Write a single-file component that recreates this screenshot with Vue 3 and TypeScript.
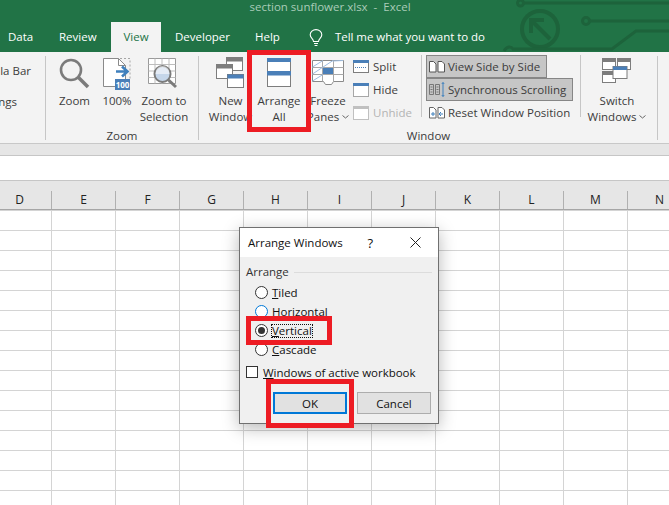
<template>
  <div class="app">
    <header class="titlebar">
      <svg class="circuit" width="180" height="52" viewBox="0 0 180 52" fill="none" stroke="#1d633b" stroke-width="3">
        <circle cx="31.5" cy="3" r="3" />
        <path d="M35 3H180" />
        <circle cx="51" cy="29" r="18" stroke-width="4" />
        <path d="M61 39 43 21M42 33V20H55" stroke-width="4" />
        <circle cx="97" cy="21" r="3.5" />
        <path d="M101 21H180M180 31H147L123 49H24C22 46 18 46 15 51" />
      </svg>
      <div class="title">section sunflower.xlsx &nbsp;-&nbsp; Excel</div>
      <nav class="tabs">
        <span class="tab tab-data">Data</span>
        <span class="tab tab-review">Review</span>
        <span class="tab tab-active">View</span>
        <span class="tab tab-dev">Developer</span>
        <span class="tab tab-help">Help</span>
        <svg class="bulb" width="14" height="18" viewBox="0 0 14 18" fill="none" stroke="#fff" stroke-width="1.1">
          <path d="M4.5 12.5C4.3 9.8 1.2 8.9 1.2 5.8a5.8 5.2 0 0 1 11.6 0c0 3.1-3.1 4-3.3 6.7z" />
          <path d="M5 14.5h4M5.6 16.5h2.8" />
        </svg>
        <span class="tab tell">Tell me what you want to do</span>
      </nav>
    </header>

    <section class="ribbon">
      <div class="group group-show">
        <div class="show-list">
          <span>Formula Bar</span>
          <span class="show-head">Headings</span>
        </div>
      </div>

      <div class="group group-zoom">
        <div class="group-body">
          <div class="big w-zoom">
            <svg class="icon" width="34" height="34" viewBox="0 0 34 34" fill="none" stroke="#7b7b7b">
              <circle cx="13" cy="13" r="10" stroke-width="2.6" />
              <path d="M20.5 20.5 30 30" stroke-width="3.6" />
            </svg>
            <span>Zoom</span>
          </div>
          <div class="big w-100">
            <svg class="icon" width="30" height="34" viewBox="0 0 30 34" fill="none">
              <path d="M1.5 1.5h15l7 7v21h-22z" fill="#fff" stroke="#8a8a8a" />
              <path d="M16.5 1.5v7h7" stroke="#8a8a8a" />
              <path d="M18 1.5h10v20" stroke="#a5a5a5" stroke-dasharray="2 2" />
              <path d="M14 14.5h11M20 9.5l5.5 5-5.5 5" stroke="#3f80bd" stroke-width="2.6" />
              <rect x="13" y="22" width="15" height="11" fill="#4a7fb8" />
              <text x="20.5" y="31" text-anchor="middle" class="badge">100</text>
            </svg>
            <span>100%</span>
          </div>
          <div class="big w-sel">
            <svg class="icon" width="34" height="34" viewBox="0 0 34 34" fill="none">
              <path d="M1.5 1.5h27v25h-27z" fill="#fff" stroke="#9a9a9a" />
              <path d="M1.5 7.5h27M1.5 14h27M1.5 20.5h27M8 1.5v25M15 1.5v25M22 1.5v25" stroke="#bdbdbd" />
              <circle cx="15.5" cy="17" r="8" fill="#c5d6ea" stroke="#7b7b7b" stroke-width="2" />
              <path d="M8.5 17h14v-1a7 7 0 0 0-14 0z" fill="#fff" opacity=".55" />
              <path d="M21.5 23 29 30" stroke="#7b7b7b" stroke-width="3" />
            </svg>
            <span>Zoom to<br />Selection</span>
          </div>
        </div>
        <div class="group-label">Zoom</div>
      </div>

      <div class="group group-window">
        <div class="group-body">
          <div class="big w-new">
            <svg class="icon" width="30" height="34" viewBox="0 0 30 34" fill="none" stroke="#7d7d7d">
              <rect x="10.5" y="0.5" width="16" height="13" fill="#fff" />
              <rect x="10.5" y="0.5" width="16" height="3.5" fill="#7d7d7d" />
              <rect x="0.5" y="7.5" width="16" height="14" fill="#fff" />
              <rect x="0.5" y="7.5" width="16" height="3.5" fill="#7d7d7d" />
              <rect x="11.5" y="17.5" width="16" height="13" fill="#fff" />
              <rect x="11.5" y="17.5" width="16" height="4" fill="#4a7fb8" stroke="none" />
            </svg>
            <span>New<br />Window</span>
          </div>
          <div class="big w-arrange">
            <svg class="icon" width="26" height="34" viewBox="0 0 26 34" fill="none">
              <rect x="1.5" y="1.5" width="23" height="28" fill="#fff" stroke="#7d7d7d" />
              <rect x="1" y="1" width="24" height="4" fill="#4a7fb8" />
              <rect x="1" y="14" width="24" height="4.5" fill="#4a7fb8" />
            </svg>
            <span>Arrange<br />All</span>
          </div>
          <div class="big w-freeze">
            <svg class="icon" width="34" height="34" viewBox="0 0 34 34" fill="none">
              <path d="M1.5 3.5h31v21h-10l-2 3h-6l-2-3h-11z" fill="#fff" stroke="#8a8a8a" />
              <path d="M1.5 10.5h31M1.5 17.5h31M11.5 3.5v21M22.5 3.5v21" stroke="#a8a8a8" />
              <path d="M1.5 10 12 3.5M1.5 17 22 3.5M1.5 24 12 17.5M22 4 32 3.5" stroke="#9dbde0" />
              <rect x="12" y="11" width="10" height="6" fill="#4a7fb8" />
            </svg>
            <span>Freeze<br />Panes <svg class="chev" width="7" height="4" viewBox="0 0 7 4" fill="none" stroke="#666"><path d="M.5.5l3 2.5 3-2.5" /></svg></span>
          </div>
          <div class="col-small">
            <div class="row-small">
              <svg class="icon-s" width="16" height="14" viewBox="0 0 16 14" fill="none">
                <rect x=".5" y=".5" width="15" height="12" fill="#fff" stroke="#7d7d7d" />
                <rect x="0" y="0" width="16" height="3" fill="#4a7fb8" />
                <path d="M2 7.5h12" stroke="#4a7fb8" stroke-dasharray="1 1" />
              </svg>
              <span>Split</span>
            </div>
            <div class="row-small">
              <svg class="icon-s" width="16" height="14" viewBox="0 0 16 14" fill="none">
                <rect x=".5" y=".5" width="15" height="13" fill="#fff" stroke="#555" stroke-dasharray="1 1" />
                <rect x="0" y="0" width="16" height="3" fill="#4a7fb8" />
              </svg>
              <span>Hide</span>
            </div>
            <div class="row-small disabled">
              <svg class="icon-s" width="16" height="14" viewBox="0 0 16 14" fill="none">
                <rect x=".5" y=".5" width="15" height="13" fill="#fff" stroke="#c0c0c0" />
                <rect x="0" y="0" width="16" height="3" fill="#c0c0c0" />
              </svg>
              <span>Unhide</span>
            </div>
          </div>
          <div class="col-side">
            <div class="row-side on">
              <svg class="icon-s" width="16" height="13" viewBox="0 0 16 13" fill="#fff" stroke="#555">
                <path d="M.5 1.5h4l2.5 2.5v8H.5zM9 1.5h4l2.5 2.5v8H9z" />
              </svg>
              <span>View Side by Side</span>
            </div>
            <div class="row-side on row-sync">
              <svg class="icon-s" width="16" height="15" viewBox="0 0 16 15" fill="none">
                <path d="M.5 2.5h4v10h-4zM6.5 2.5h4v10h-4zM1.5 5h2M1.5 7.5h2M1.5 10h2M7.5 5h2M7.5 7.5h2M7.5 10h2" stroke="#777" />
                <path d="M14 .5v14M12.8 2 14 .5 15.2 2M12.8 13l1.2 1.5 1.2-1.5" stroke="#3f80bd" />
              </svg>
              <span>Synchronous Scrolling</span>
            </div>
            <div class="row-side">
              <svg class="icon-s" width="16" height="13" viewBox="0 0 16 13" fill="#fff" stroke="#666">
                <path d="M.5 1.5h4l2.5 2.5v8H.5zM9 1.5h4l2.5 2.5v8H9z" />
                <path d="M2 8h4M4 6v4M10 8h4M10 8l2-2M10 8l2 2" stroke="#3f80bd" fill="none" />
              </svg>
              <span>Reset Window Position</span>
            </div>
          </div>
          <div class="big w-switch">
            <svg class="icon" width="30" height="34" viewBox="0 0 30 34" fill="none" stroke="#7d7d7d">
              <rect x="0.5" y="1.5" width="13" height="11" fill="#fff" />
              <rect x="0.5" y="1.5" width="13" height="3" fill="#7d7d7d" />
              <rect x="15.5" y="1.5" width="13" height="11" fill="#fff" />
              <rect x="15.5" y="1.5" width="13" height="3" fill="#7d7d7d" />
              <rect x="0.5" y="14.5" width="13" height="11" fill="#fff" />
              <rect x="0.5" y="14.5" width="13" height="3" fill="#7d7d7d" />
              <rect x="11" y="9.5" width="14" height="12" fill="#fff" />
              <rect x="11" y="9.5" width="14" height="3.5" fill="#4a7fb8" stroke="none" />
            </svg>
            <span>Switch<br />Windows <svg class="chev" width="7" height="4" viewBox="0 0 7 4" fill="none" stroke="#666"><path d="M.5.5l3 2.5 3-2.5" /></svg></span>
          </div>
        </div>
        <div class="group-label label-window">Window</div>
      </div>
    </section>

    <div class="band"></div>
    <div class="formula"></div>

    <div class="col-head">
      <span v-for="c in columns" :key="c" class="col-cell">{{ c }}</span>
    </div>
    <div class="sheet"></div>

    <div class="dialog">
      <div class="dlg-title">
        <span class="dlg-name">Arrange Windows</span>
        <span class="dlg-help">?</span>
        <svg width="11" height="11" viewBox="0 0 11 11" fill="none" stroke="#222"><path d="M.5.5l10 10M10.5.5l-10 10" /></svg>
      </div>
      <div class="dlg-body">
        <div class="fieldset"><span>Arrange</span><i></i></div>
        <div class="radios">
          <label v-for="r in radios" :key="r.name" class="radio" :class="{ hover: r.hover, sel: r.sel }">
            <b class="dot"></b>
            <span class="radio-text"><u>{{ r.name[0] }}</u>{{ r.name.slice(1) }}</span>
          </label>
        </div>
        <label class="check"><b class="box"></b><span><u>W</u>indows of active workbook</span></label>
        <div class="buttons">
          <button class="btn btn-ok">OK</button>
          <button class="btn">Cancel</button>
        </div>
      </div>
    </div>

    <div class="mark mark-arrange"></div>
    <div class="mark mark-vertical"></div>
    <div class="mark mark-ok"></div>
  </div>
</template>

<script setup lang="ts">
const columns = ['D', 'E', 'F', 'G', 'H', 'I', 'J', 'K', 'L', 'M', 'N']

const radios = [
  { name: 'Tiled' },
  { name: 'Horizontal', hover: true },
  { name: 'Vertical', sel: true },
  { name: 'Cascade' }
]
</script>

<style>
html, body { margin: 0; overflow: hidden; background: #fff; }
</style>

<style scoped>
.app {
  position: relative;
  width: 669px;
  height: 505px;
  overflow: hidden;
  display: flex;
  flex-direction: column;
  font-family: "Open Sans", "Noto Sans", sans-serif;
  font-size: 11.5px;
  color: #3c3c3c;
  background: #fff;
}

.titlebar {
  position: relative;
  height: 52px;
  flex: none;
  background: #217346;
}
.circuit { position: absolute; right: 0; top: 0; }
.title {
  position: relative;
  height: 22px;
  line-height: 13px;
  text-align: center;
  padding-right: 9px;
  color: #a9ccb8;
}
.tabs { position: relative; display: flex; height: 30px; color: #fff; }
.tab { line-height: 30px; }
.tab-data { margin-left: 8px; width: 51px; }
.tab-review { width: 52px; }
.tab-active {
  width: 50px;
  text-align: center;
  background: #f3f3f3;
  color: #217346;
}
.tab-dev { margin-left: 14px; width: 80px; }
.tab-help { width: 54px; }
.bulb { margin-top: 7px; }
.tell { margin-left: 12px; letter-spacing: -0.05px; }

.ribbon {
  flex: none;
  height: 92px;
  box-sizing: border-box;
  padding-top: 4px;
  display: flex;
  background: #f3f3f3;
  border-bottom: 1px solid #c8c8c8;
}
.group {
  height: 84px;
  box-sizing: border-box;
  border-right: 1px solid #c6c6c6;
}
.group-body { display: flex; height: 72px; }
.group-label { text-align: center; line-height: 16px; height: 12px; }
.group-show { width: 46px; overflow: hidden; }
.show-list {
  display: flex;
  flex-direction: column;
  align-items: flex-end;
  width: 31px;
  line-height: 16px;
  padding-top: 7px;
  white-space: nowrap;
}
.show-head { margin-top: 15px; margin-right: 14px; }
.group-zoom { width: 153px; padding-left: 6px; }
.group-zoom .group-label { padding-right: 6px; }
.group-window { width: 459px; padding-left: 5px; }
.label-window { padding-right: 4px; }

.big {
  flex: none;
  display: flex;
  flex-direction: column;
  align-items: center;
  text-align: center;
  padding-top: 1px;
  line-height: 16px;
  white-space: nowrap;
}
.icon { display: block; height: 34px; margin-bottom: 2px; flex: none; }
.chev { vertical-align: 2px; }
.w-zoom { width: 45px; }
.w-100 { width: 40px; }
.w-sel { width: 54px; }
.w-new { width: 53px; }
.w-arrange { width: 44px; }
.w-freeze { width: 48px; margin-left: 3px; }
.w-switch { width: 72px; }

.col-small {
  width: 69px;
  height: 62px;
  margin: -1px 4px 0 1px;
  box-sizing: border-box;
  border-right: 1px solid #c6c6c6;
}
.row-small {
  height: 23px;
  display: flex;
  align-items: center;
  gap: 4px;
  white-space: nowrap;
}
.disabled { color: #b4b4b4; }
.col-side {
  width: 155px;
  height: 62px;
  margin-top: -1px;
  border-right: 1px solid #c6c6c6;
  box-sizing: border-box;
  white-space: nowrap;
}
.row-side {
  height: 23px;
  box-sizing: border-box;
  display: flex;
  align-items: center;
  gap: 3px;
  padding-left: 3px;
  width: max-content;
  padding-right: 6px;
}
.on { background: #c6c6c6; border: 1px solid #868686; padding-left: 2px; }
.badge { font-size: 8px; font-weight: 700; fill: #fff; }

.band {
  flex: none;
  height: 11px;
  background: #e6e6e6;
  border-bottom: 1px solid #c6c6c6;
}
.formula {
  flex: none;
  height: 24px;
  background: #fff;
  border-bottom: 1px solid #c6c6c6;
}
.col-head {
  flex: none;
  height: 29px;
  box-sizing: border-box;
  padding-top: 10px;
  display: flex;
  background: #e6e6e6;
  border-bottom: 1px solid #a6a6a6;
  margin-left: -12px;
  color: #222;
}
.col-cell {
  flex: none;
  width: 64px;
  box-sizing: border-box;
  border-right: 1px solid #b0b0b0;
  text-align: center;
  line-height: 18px;
  font-size: 12px;
}
.sheet {
  flex: 1;
  background-color: #fff;
  background-image:
    linear-gradient(#d4d4d4 1px, transparent 1px),
    linear-gradient(90deg, #d4d4d4 1px, transparent 1px);
  background-size: 64px 20px;
  background-position: 51px 20px;
}

.dialog {
  position: absolute;
  left: 239px;
  top: 227px;
  width: 200px;
  height: 197px;
  box-sizing: border-box;
  background: #f0f0f0;
  border: 1px solid #707070;
  box-shadow: 0 4px 16px rgba(0, 0, 0, .28);
  color: #111;
}
.dlg-title {
  height: 29px;
  background: #fff;
  display: flex;
  align-items: center;
  padding: 0 17px 0 8px;
}
.dlg-name { flex: 1; }
.dlg-help { margin-right: 37px; font-size: 13px; }
.dlg-body { padding: 7px 6px 0 6px; }
.fieldset { display: flex; align-items: center; gap: 5px; line-height: 16px; color: #333; }
.fieldset i { flex: 1; height: 1px; background: #dcdcdc; }
.radios { margin-top: 3px; padding-left: 9px; }
.radio { display: flex; align-items: center; height: 19px; gap: 4px; }
.dot {
  width: 13px;
  height: 13px;
  box-sizing: border-box;
  border: 1px solid #333;
  border-radius: 50%;
  background: #fff;
  flex: none;
}
.hover .dot { border-color: #0078d7; }
.sel .dot { display: flex; align-items: center; justify-content: center; }
.sel .dot::after {
  content: "";
  width: 7px;
  height: 7px;
  border-radius: 50%;
  background: #333;
}
.sel .radio-text { outline: 1px dotted #111; line-height: 12px; }
.check { display: flex; align-items: center; gap: 5px; margin-top: 6px; height: 14px; white-space: nowrap; letter-spacing: -0.03px; }
.box {
  width: 12px;
  height: 12px;
  box-sizing: border-box;
  border: 1px solid #333;
  background: #fff;
  flex: none;
}
.buttons { display: flex; justify-content: flex-end; gap: 10px; margin-top: 13px; margin-right: 1px; }
.btn {
  width: 74px;
  height: 22px;
  padding: 0;
  box-sizing: border-box;
  background: #e1e1e1;
  border: 1px solid #adadad;
  font: inherit;
  color: #111;
}
.btn-ok { border: 2px solid #0078d7; }

.mark {
  position: absolute;
  box-sizing: border-box;
  border: 5px solid #ed1c24;
  pointer-events: none;
}
.mark-arrange { left: 247px; top: 50px; width: 64px; height: 82px; }
.mark-vertical { left: 246px; top: 316px; width: 86px; height: 29px; }
.mark-ok { left: 266px; top: 379px; width: 88px; height: 49px; }
</style>
